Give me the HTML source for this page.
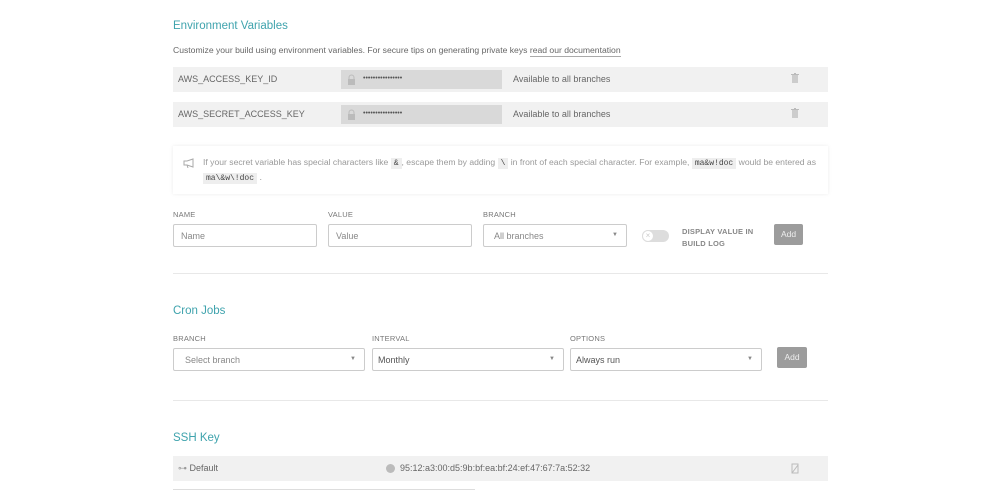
<!DOCTYPE html>
<html><head><meta charset="utf-8"><style>
*{box-sizing:border-box;margin:0;padding:0}
body{width:1000px;height:491px;background:#fff;font-family:"Liberation Sans",sans-serif;color:#666;position:relative;overflow:hidden;font-size:9px}
.a{position:absolute;white-space:nowrap}
.h{color:#3fa3ad;font-size:11.5px}
.row{position:absolute;left:173px;width:655px;height:25px;background:#f1f1f1}
.mask{position:absolute;left:168px;top:3px;width:161px;height:19px;background:#d9d9d9}
.lbl{font-size:7.5px;color:#777;letter-spacing:.2px}
.inp{position:absolute;height:23px;border:1px solid #ccc;border-radius:2px;background:#fff;color:#888;font-size:9px;padding:6px 10px;}
.sel::after{content:"▼";position:absolute;right:8px;top:7px;font-size:6px;color:#888}
.btn{position:absolute;background:#9c9c9c;color:#eee;border-radius:2px;font-size:8.5px;text-align:center}
.hr{position:absolute;left:173px;width:655px;height:1px;background:#e8e8e8}
code{font-family:"Liberation Mono",monospace;background:#eee;padding:1px 3px;font-size:8px;color:#444}
.dots{left:22px;top:5px;font-size:7px;letter-spacing:0;color:#555}
</style></head><body>
<div class="a h" style="left:173px;top:20px">Environment Variables</div>
<div class="a" style="left:173px;top:45px;font-size:8.6px">Customize your build using environment variables. For secure tips on generating private keys <span style="border-bottom:1px solid #aaa;padding-bottom:1px">read our documentation</span></div>

<div class="row" style="top:67px"><div class="a" style="left:5px;top:7px">AWS_ACCESS_KEY_ID</div><div class="mask"><svg class="a" style="left:6px;top:4px" width="9" height="11"><path d="M2 5V3.5a2.5 2.5 0 015 0V5" stroke="#bbb" fill="none"/><rect x="1" y="5" width="7" height="6" fill="#bbb"/></svg><div class="a dots">••••••••••••••••</div></div><div class="a" style="left:340px;top:7px">Available to all branches</div><svg class="a" style="left:618px;top:6px" width="8" height="10"><rect x="1" y="2" width="6" height="8" fill="#ccc"/><rect x="0" y="1" width="8" height="1" fill="#bbb"/><rect x="3" y="0" width="2" height="1" fill="#bbb"/></svg></div>
<div class="row" style="top:102px"><div class="a" style="left:5px;top:7px">AWS_SECRET_ACCESS_KEY</div><div class="mask"><svg class="a" style="left:6px;top:4px" width="9" height="11"><path d="M2 5V3.5a2.5 2.5 0 015 0V5" stroke="#bbb" fill="none"/><rect x="1" y="5" width="7" height="6" fill="#bbb"/></svg><div class="a dots">••••••••••••••••</div></div><div class="a" style="left:340px;top:7px">Available to all branches</div><svg class="a" style="left:618px;top:6px" width="8" height="10"><rect x="1" y="2" width="6" height="8" fill="#ccc"/><rect x="0" y="1" width="8" height="1" fill="#bbb"/><rect x="3" y="0" width="2" height="1" fill="#bbb"/></svg></div>

<div class="a" style="left:173px;top:146px;width:655px;height:48px;background:#fff;box-shadow:0 0 4px rgba(0,0,0,.08)">
<svg class="a" style="left:10px;top:12px" width="13" height="10"><path d="M1 3h3l6-2v8L4 7H1z M4 7l1 3" stroke="#aaa" fill="none"/></svg>
<div class="a" style="left:30px;top:11px;color:#999;font-size:8.6px">If your secret variable has special characters like <code>&amp;</code>, escape them by adding <code>\</code> in front of each special character. For example, <code>ma&amp;w!doc</code> would be entered as</div>
<div class="a" style="left:30px;top:26px;color:#999"><code>ma\&amp;w\!doc</code> .</div>
</div>

<div class="a lbl" style="left:173px;top:210px">NAME</div>
<div class="a lbl" style="left:328px;top:210px">VALUE</div>
<div class="a lbl" style="left:483px;top:210px">BRANCH</div>
<div class="inp" style="left:173px;top:224px;width:144px;padding-left:7px">Name</div>
<div class="inp" style="left:328px;top:224px;width:144px;padding-left:7px">Value</div>
<div class="inp sel" style="left:483px;top:224px;width:144px">All branches</div>
<div class="a" style="left:642px;top:230px;width:27px;height:12px;border-radius:6px;background:#ddd"><div class="a" style="left:0;top:0;width:12px;height:12px;border-radius:6px;background:#fff;border:1px solid #ddd;font-size:8px;color:#ccc;text-align:center;line-height:10px">×</div></div>
<div class="a lbl" style="left:682px;top:226px;line-height:12px;font-weight:bold;color:#888">DISPLAY VALUE IN<br>BUILD LOG</div>
<div class="btn" style="left:774px;top:224px;width:29px;height:21px;line-height:21px">Add</div>

<div class="hr" style="top:273px"></div>
<div class="a h" style="left:173px;top:305px">Cron Jobs</div>
<div class="a lbl" style="left:173px;top:334px">BRANCH</div>
<div class="a lbl" style="left:372px;top:334px">INTERVAL</div>
<div class="a lbl" style="left:570px;top:334px">OPTIONS</div>
<div class="inp sel" style="left:173px;top:348px;width:192px;padding-left:11px">Select branch</div>
<div class="inp sel" style="left:372px;top:348px;width:192px;padding-left:5px;color:#555">Monthly</div>
<div class="inp sel" style="left:570px;top:348px;width:192px;padding-left:5px;color:#555">Always run</div>
<div class="btn" style="left:777px;top:347px;width:30px;height:21px;line-height:21px">Add</div>

<div class="hr" style="top:400px"></div>
<div class="a h" style="left:173px;top:432px">SSH Key</div>
<div class="row" style="top:456px"><div class="a" style="left:5px;top:7px;color:#666"><span style="color:#999">⊶</span> Default</div><div class="a" style="left:213px;top:8px;width:9px;height:9px;border-radius:5px;background:#bbb"></div><div class="a" style="left:227px;top:7px">95:12:a3:00:d5:9b:bf:ea:bf:24:ef:47:67:7a:52:32</div><svg class="a" style="left:618px;top:6px" width="8" height="12"><rect x="1" y="2" width="6" height="9" fill="none" stroke="#bbb"/><path d="M1 11L7 3" stroke="#bbb"/></svg></div>
<div class="a" style="left:173px;top:489px;width:302px;height:1px;background:#ddd"></div>
</body></html>
